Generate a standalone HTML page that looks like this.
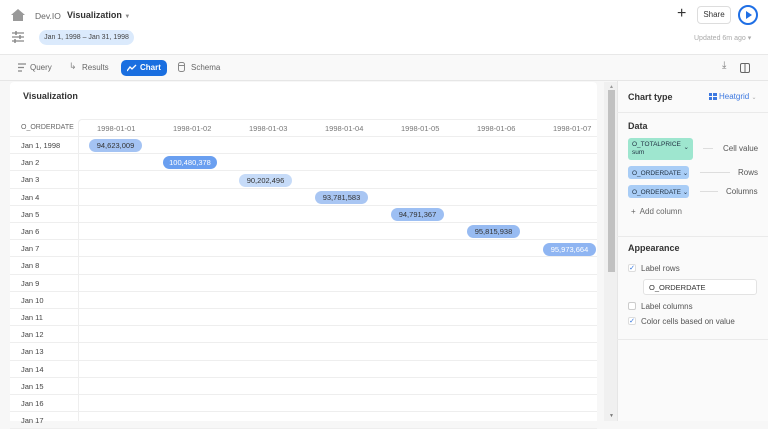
<!DOCTYPE html>
<html><head><meta charset="utf-8"><style>
*{box-sizing:border-box;margin:0;padding:0}
body{width:768px;height:421px;overflow:hidden;font-family:"Liberation Sans",sans-serif;background:#f7f7f7;position:relative;color:#333}
.a{position:absolute}
.t{font-size:8px;color:#555;white-space:nowrap}
.pill{position:absolute;height:13px;width:53px;border-radius:7px;font-size:7.5px;line-height:13px;text-align:center;color:#333}
.row{position:absolute;left:10px;width:587px;height:17.2px;border-bottom:1px solid #eee}
.row span{position:absolute;left:11px;top:4px;font-size:7.5px;color:#444}
.chip{position:absolute;left:628px;height:13px;background:#a9cdf6;border-radius:3px;font-size:6.5px;color:#234;padding:3px 4px;white-space:nowrap}
.lbl{position:absolute;font-size:8px;color:#555}
.line{position:absolute;height:1px;background:#ddd}
.cb{position:absolute;left:628px;width:8px;height:8px;border:1px solid #ccc;border-radius:2px;background:#fff;font-size:7px;color:#2a6fdb;line-height:7px;text-align:center}
</style></head><body>
<!-- header -->
<div class="a" style="left:0;top:0;width:768px;height:55px;background:#fff;border-bottom:1px solid #e8e8e8"></div>
<svg class="a" style="left:11px;top:9px" width="14" height="12" viewBox="0 0 14 12"><path d="M7 0L0 6h2v6h10V6h2z" fill="#999"/></svg>
<div class="a t" style="left:35px;top:11px;font-size:8.5px;color:#666">Dev.IO</div>
<div class="a t" style="left:67px;top:10px;font-size:9px;color:#333;font-weight:bold">Visualization <span style="font-size:6px;color:#888">▼</span></div>
<svg class="a" style="left:12px;top:31px" width="12" height="12" viewBox="0 0 12 12" stroke="#888" stroke-width="1.2"><path d="M0 2h12M0 6h12M0 10h12"/><path d="M4 0v4M8 4v4M3 8v4" stroke-width="1.5"/></svg>
<div class="a" style="left:39px;top:30px;width:95px;height:15px;background:#dbeafc;border-radius:8px;font-size:7px;color:#444;line-height:15px;text-align:center">Jan 1, 1998 – Jan 31, 1998</div>
<div class="a" style="left:677px;top:5px;font-size:16px;color:#333;line-height:18px">+</div>
<div class="a" style="left:697px;top:6px;width:34px;height:18px;border:1px solid #ddd;border-radius:4px;background:#fff;font-size:8px;line-height:16px;text-align:center;color:#333">Share</div>
<div class="a" style="left:738px;top:5px;width:20px;height:20px;border:2px solid #1f6fe5;border-radius:50%;background:#fff"></div>
<svg class="a" style="left:745px;top:11px" width="8" height="8" viewBox="0 0 8 8"><path d="M1 0L7 4 1 8z" fill="#1f6fe5"/></svg>
<div class="a t" style="left:694px;top:34px;font-size:7px;color:#aaa">Updated 6m ago ▾</div>
<!-- tabs -->
<div class="a" style="left:0;top:55px;width:768px;height:26px;background:#f9f9f9;border-bottom:1px solid #e6e6e6"></div>
<svg class="a" style="left:18px;top:63px" width="8" height="9" viewBox="0 0 8 9" stroke="#888" stroke-width="1.2"><path d="M0 1h8M0 4.5h6M0 8h4"/></svg>
<div class="a t" style="left:30px;top:63px;color:#666">Query</div>
<div class="a t" style="left:69px;top:61px;color:#888;font-size:9px">↳</div>
<div class="a t" style="left:82px;top:63px;color:#666">Results</div>
<div class="a" style="left:121px;top:60px;width:46px;height:16px;background:#1a6fe0;border-radius:5px;color:#fff;font-size:8px;font-weight:bold;line-height:16px;padding-left:19px">Chart</div>
<svg class="a" style="left:127px;top:64px" width="10" height="8" viewBox="0 0 10 8" fill="none" stroke="#fff" stroke-width="1.3"><path d="M0 7l3-4 2 2 4-4"/></svg>
<svg class="a" style="left:178px;top:62px" width="7" height="10" viewBox="0 0 7 10" fill="none" stroke="#888"><rect x=".5" y=".5" width="6" height="9" rx="2"/><path d="M.5 3.5h6"/></svg>
<div class="a t" style="left:191px;top:63px;color:#666">Schema</div>
<div class="a" style="left:722px;top:60px;font-size:10px;color:#777">⤓</div>
<svg class="a" style="left:740px;top:63px" width="10" height="10" viewBox="0 0 10 10" fill="none" stroke="#666"><rect x=".5" y=".5" width="9" height="9" rx="1.5"/><path d="M5 .5v9"/></svg>
<!-- card -->
<div class="a" style="left:10px;top:82px;width:587px;height:339px;background:#fff;border-radius:4px 4px 0 0"></div>
<div class="a" style="left:23px;top:91px;font-size:9px;font-weight:bold;color:#333">Visualization</div>
<div class="a" style="left:10px;top:119px;width:587px;height:18px;border-bottom:1px solid #eee"></div>
<div class="a" style="left:78px;top:119px;width:519px;height:302px;border-left:1px solid #eee;border-top:1px solid #eee;border-radius:4px 0 0 0"></div>
<div class="a t" style="left:21px;top:124px;font-size:7px;color:#666">O_ORDERDATE</div>
<div class="a t" style="left:97px;top:124px;font-size:7.5px;color:#777">1998-01-01</div>
<div class="a t" style="left:173px;top:124px;font-size:7.5px;color:#777">1998-01-02</div>
<div class="a t" style="left:249px;top:124px;font-size:7.5px;color:#777">1998-01-03</div>
<div class="a t" style="left:325px;top:124px;font-size:7.5px;color:#777">1998-01-04</div>
<div class="a t" style="left:401px;top:124px;font-size:7.5px;color:#777">1998-01-05</div>
<div class="a t" style="left:477px;top:124px;font-size:7.5px;color:#777">1998-01-06</div>
<div class="a t" style="left:553px;top:124px;font-size:7.5px;color:#777">1998-01-07</div>
<div class="row" style="top:137px"><span>Jan 1, 1998</span></div>
<div class="row" style="top:154.2px"><span>Jan 2</span></div>
<div class="row" style="top:171.4px"><span>Jan 3</span></div>
<div class="row" style="top:188.6px"><span>Jan 4</span></div>
<div class="row" style="top:205.8px"><span>Jan 5</span></div>
<div class="row" style="top:223px"><span>Jan 6</span></div>
<div class="row" style="top:240.2px"><span>Jan 7</span></div>
<div class="row" style="top:257.4px"><span>Jan 8</span></div>
<div class="row" style="top:274.6px"><span>Jan 9</span></div>
<div class="row" style="top:291.8px"><span>Jan 10</span></div>
<div class="row" style="top:309px"><span>Jan 11</span></div>
<div class="row" style="top:326.2px"><span>Jan 12</span></div>
<div class="row" style="top:343.4px"><span>Jan 13</span></div>
<div class="row" style="top:360.6px"><span>Jan 14</span></div>
<div class="row" style="top:377.8px"><span>Jan 15</span></div>
<div class="row" style="top:395px"><span>Jan 16</span></div>
<div class="row" style="top:412.2px"><span>Jan 17</span></div>
<div class="pill" style="left:89px;top:139px;background:#a4c3f3">94,623,009</div>
<div class="pill" style="left:163px;top:156px;width:54px;background:#6a9ff0;color:#fff">100,480,378</div>
<div class="pill" style="left:239px;top:174px;background:#c6dbf8">90,202,496</div>
<div class="pill" style="left:315px;top:191px;background:#a9c6f3">93,781,583</div>
<div class="pill" style="left:391px;top:208px;background:#9dbff3">94,791,367</div>
<div class="pill" style="left:467px;top:225px;background:#97bbf2">95,815,938</div>
<div class="pill" style="left:543px;top:243px;background:#8fb5f2;color:#fff">95,973,664</div>
<!-- scrollbar -->
<div class="a" style="left:604px;top:82px;width:13px;height:339px;background:#f0f0f0"></div>
<div class="a" style="left:608px;top:90px;width:7px;height:182px;background:#c1c1c1"></div>
<div class="a" style="left:609px;top:84px;font-size:5px;color:#999">▲</div>
<div class="a" style="left:609px;top:413px;font-size:5px;color:#777">▼</div>
<!-- right panel -->
<div class="a" style="left:617px;top:81px;width:151px;height:340px;background:#fafafa;border-left:1px solid #e6e6e6"></div>
<div class="a" style="left:628px;top:92px;font-size:9px;font-weight:bold;color:#333">Chart type</div>
<svg class="a" style="left:709px;top:93px" width="8" height="7" viewBox="0 0 8 7" fill="#3c78e0"><rect width="3" height="3"/><rect x="4" width="4" height="3"/><rect y="4" width="3" height="3"/><rect x="4" y="4" width="4" height="3"/></svg>
<div class="a" style="left:719px;top:92px;font-size:8px;color:#3c78e0">Heatgrid <span style="color:#aaa;font-size:6px">⌄</span></div>
<div class="a" style="left:617px;top:112px;width:151px;height:1px;background:#eaeaea"></div>
<div class="a" style="left:628px;top:121px;font-size:9px;font-weight:bold;color:#333">Data</div>
<div class="chip" style="top:138px;height:22px;width:65px;background:#9ee6cf;line-height:8px">O_TOTALPRICE<br>sum<span style="position:absolute;right:4px;top:6px">⌄</span></div>
<div class="line" style="left:703px;top:148px;width:10px"></div>
<div class="lbl" style="left:723px;top:144px">Cell value</div>
<div class="chip" style="top:166px;width:61px">O_ORDERDATE ⌄</div>
<div class="line" style="left:700px;top:172px;width:30px"></div>
<div class="lbl" style="left:738px;top:168px">Rows</div>
<div class="chip" style="top:185px;width:61px">O_ORDERDATE ⌄</div>
<div class="line" style="left:700px;top:191px;width:18px"></div>
<div class="lbl" style="left:726px;top:187px">Columns</div>
<div class="lbl" style="left:631px;top:207px;color:#666">+&nbsp; Add column</div>
<div class="a" style="left:617px;top:236px;width:151px;height:1px;background:#eaeaea"></div>
<div class="a" style="left:628px;top:243px;font-size:9px;font-weight:bold;color:#333">Appearance</div>
<div class="cb" style="top:264px;border-color:#ddd">✓</div>
<div class="lbl" style="left:641px;top:264px">Label rows</div>
<div class="a" style="left:643px;top:279px;width:114px;height:16px;border:1px solid #e3e3e3;border-radius:3px;background:#fff;font-size:7.5px;color:#333;padding:3px 5px">O_ORDERDATE</div>
<div class="cb" style="top:302px"></div>
<div class="lbl" style="left:641px;top:302px">Label columns</div>
<div class="cb" style="top:317px;border-color:#ddd">✓</div>
<div class="lbl" style="left:641px;top:317px">Color cells based on value</div>
<div class="a" style="left:617px;top:339px;width:151px;height:1px;background:#eaeaea"></div>
</body></html>
